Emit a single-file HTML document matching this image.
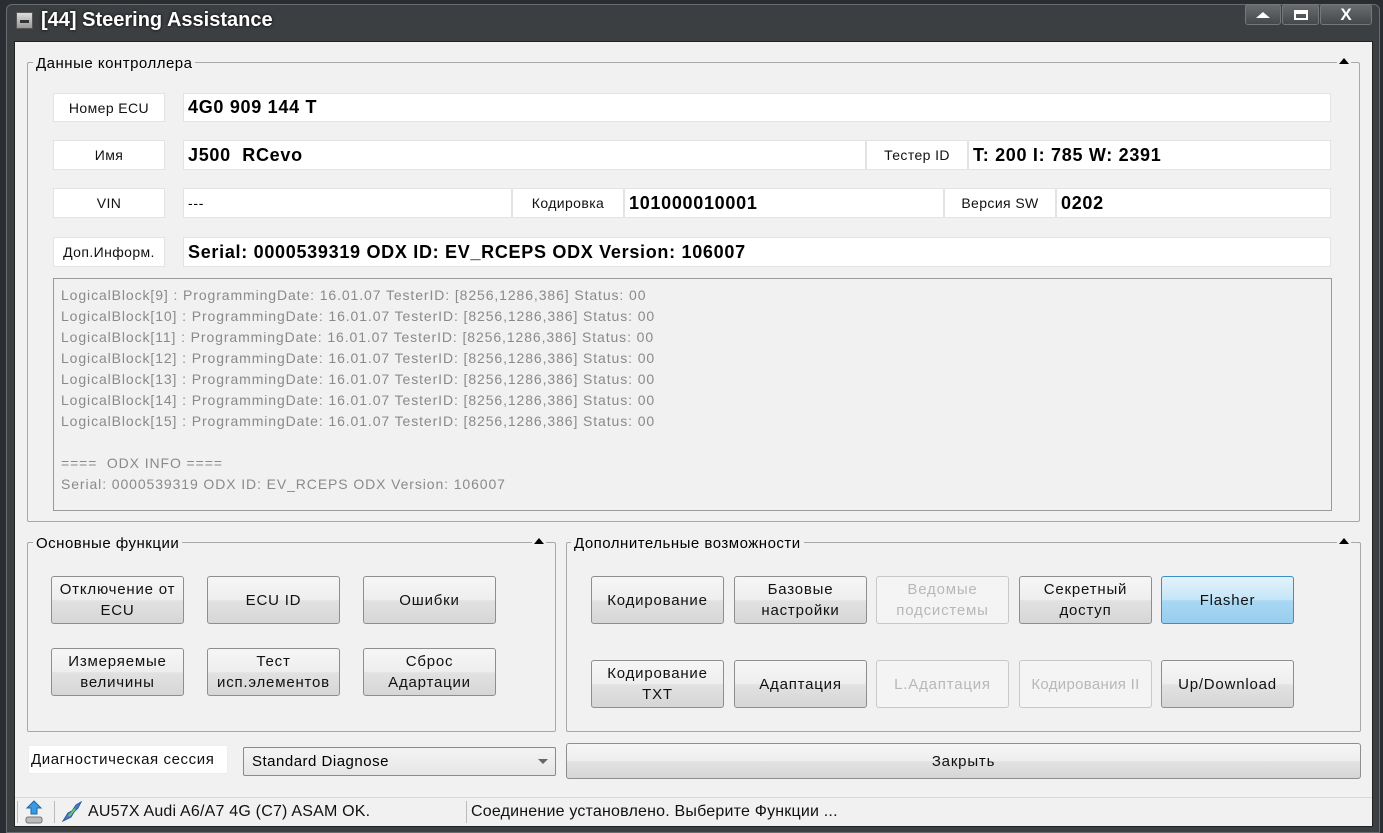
<!DOCTYPE html>
<html><head><meta charset="utf-8"><style>
*{margin:0;padding:0;box-sizing:border-box}
body{width:1383px;height:833px;background:#2a2e33;font-family:"Liberation Sans",sans-serif;position:relative;overflow:hidden}
.a{position:absolute}
.win{left:6px;top:4px;width:1374px;height:829px;background:#3c3f42;border:1px solid #6a6d70;border-radius:6px 6px 0 0}
.content{left:14px;top:41px;width:1359px;height:786px;background:#f1f1f1;border:1px solid #222}
.grp{border:1px solid #a8a8a8;border-radius:2px}
.gt{background:#f1f1f1;font-size:15px;letter-spacing:0.5px;color:#000;padding:0 3px;white-space:nowrap}
.lb{background:#fff;border:1px solid #e3e3e3;font-size:14px;letter-spacing:0.4px;color:#111;display:flex;align-items:center;justify-content:center;white-space:nowrap}
.vb{background:#fff;border:1px solid #e3e3e3;font-size:18px;letter-spacing:0.7px;font-weight:bold;color:#000;display:flex;align-items:center;padding-left:4px;white-space:nowrap}
.vn{font-weight:normal;font-size:14px}
.btn{border:1px solid #8e8e8e;border-radius:3px;background:linear-gradient(#f6f6f6,#eeeeee 50%,#e2e2e2 51%,#d6d6d6);font-size:15px;letter-spacing:0.8px;color:#111;display:flex;align-items:center;justify-content:center;text-align:center;line-height:21px}
.dis{border-color:#c8c8c8;background:#f4f4f4;color:#b8b8b8}
.fl{border-color:#3c8fc7;background:linear-gradient(#e3f3fc,#c4e5f7 50%,#a9d8f3 51%,#98cdee)}
.tri{width:0;height:0;border-left:5px solid transparent;border-right:5px solid transparent;border-bottom:6px solid #000}
.log{font-size:14px;letter-spacing:0.9px;color:#8a8a8a;line-height:21px;white-space:pre}
.tb{border:1px solid #777;border-radius:3px;background:linear-gradient(#6a6d70,#45484b);color:#fff;display:flex;align-items:center;justify-content:center;font-weight:bold}
</style></head><body>
<div class="a win"></div>
<div class="a" style="left:16px;top:12px;width:17px;height:17px;background:linear-gradient(#ddd,#999);border:1px solid #555;"><div class="a" style="left:3px;top:7px;width:9px;height:3px;background:#333"></div></div>
<div class="a" style="left:41px;top:9px;font-size:20px;font-weight:bold;color:#fff;text-shadow:0 0 3px #000">[44] Steering Assistance</div>
<div class="a tb" style="left:1245px;top:4px;width:36px;height:21px"><div class="tri" style="border-bottom-color:#fff;border-left-width:7px;border-right-width:7px"></div></div>
<div class="a tb" style="left:1282px;top:4px;width:37px;height:21px"><div style="width:14px;height:10px;border:2px solid #fff;border-top-width:4px"></div></div>
<div class="a tb" style="left:1320px;top:4px;width:52px;height:21px;font-size:17px">X</div>
<div class="a content"></div>

<div class="a grp" style="left:27px;top:62px;width:1333px;height:460px"></div>
<div class="a gt" style="left:33px;top:55px">Данные контроллера</div>
<div class="a gt" style="left:1337px;top:58px;padding:0 2px"><div class="tri"></div></div>

<div class="a lb" style="left:53px;top:93px;width:112px;height:29px">Номер ECU</div>
<div class="a vb" style="left:183px;top:93px;width:1148px;height:29px">4G0 909 144 T</div>
<div class="a lb" style="left:53px;top:140px;width:112px;height:30px">Имя</div>
<div class="a vb" style="left:183px;top:140px;width:683px;height:30px">J500&nbsp; RCevo</div>
<div class="a lb" style="left:866px;top:140px;width:102px;height:30px">Тестер ID</div>
<div class="a vb" style="left:968px;top:140px;width:363px;height:30px">T: 200 I: 785 W: 2391</div>
<div class="a lb" style="left:53px;top:188px;width:112px;height:30px">VIN</div>
<div class="a vb" style="left:183px;top:188px;width:329px;height:30px"><span class="vn">---</span></div>
<div class="a lb" style="left:512px;top:188px;width:112px;height:30px">Кодировка</div>
<div class="a vb" style="left:624px;top:188px;width:320px;height:30px">101000010001</div>
<div class="a lb" style="left:944px;top:188px;width:112px;height:30px">Версия SW</div>
<div class="a vb" style="left:1056px;top:188px;width:275px;height:30px">0202</div>
<div class="a lb" style="left:53px;top:237px;width:112px;height:30px">Доп.Информ.</div>
<div class="a vb" style="left:183px;top:237px;width:1148px;height:30px">Serial: 0000539319 ODX ID: EV_RCEPS ODX Version: 106007</div>

<div class="a" style="left:53px;top:278px;width:1279px;height:233px;border:1px solid #9a9a9a;background:#f1f1f1"></div>
<div class="a log" style="left:61px;top:285px">LogicalBlock[9] : ProgrammingDate: 16.01.07 TesterID: [8256,1286,386] Status: 00
LogicalBlock[10] : ProgrammingDate: 16.01.07 TesterID: [8256,1286,386] Status: 00
LogicalBlock[11] : ProgrammingDate: 16.01.07 TesterID: [8256,1286,386] Status: 00
LogicalBlock[12] : ProgrammingDate: 16.01.07 TesterID: [8256,1286,386] Status: 00
LogicalBlock[13] : ProgrammingDate: 16.01.07 TesterID: [8256,1286,386] Status: 00
LogicalBlock[14] : ProgrammingDate: 16.01.07 TesterID: [8256,1286,386] Status: 00
LogicalBlock[15] : ProgrammingDate: 16.01.07 TesterID: [8256,1286,386] Status: 00

====  ODX INFO ====
Serial: 0000539319 ODX ID: EV_RCEPS ODX Version: 106007</div>

<div class="a grp" style="left:27px;top:542px;width:529px;height:190px"></div>
<div class="a gt" style="left:33px;top:535px">Основные функции</div>
<div class="a gt" style="left:532px;top:538px;padding:0 2px"><div class="tri"></div></div>
<div class="a btn" style="left:51px;top:576px;width:133px;height:48px">Отключение от<br>ECU</div>
<div class="a btn" style="left:207px;top:576px;width:133px;height:48px">ECU ID</div>
<div class="a btn" style="left:363px;top:576px;width:133px;height:48px">Ошибки</div>
<div class="a btn" style="left:51px;top:648px;width:133px;height:48px">Измеряемые<br>величины</div>
<div class="a btn" style="left:207px;top:648px;width:133px;height:48px">Тест<br>исп.элементов</div>
<div class="a btn" style="left:363px;top:648px;width:133px;height:48px">Сброс<br>Адартации</div>

<div class="a grp" style="left:566px;top:542px;width:795px;height:190px"></div>
<div class="a gt" style="left:571px;top:535px">Дополнительные возможности</div>
<div class="a gt" style="left:1337px;top:538px;padding:0 2px"><div class="tri"></div></div>
<div class="a btn" style="left:591px;top:576px;width:133px;height:48px">Кодирование</div>
<div class="a btn" style="left:734px;top:576px;width:133px;height:48px">Базовые<br>настройки</div>
<div class="a btn dis" style="left:876px;top:576px;width:133px;height:48px">Ведомые<br>подсистемы</div>
<div class="a btn" style="left:1019px;top:576px;width:133px;height:48px">Секретный<br>доступ</div>
<div class="a btn fl" style="left:1161px;top:576px;width:133px;height:48px">Flasher</div>
<div class="a btn" style="left:591px;top:660px;width:133px;height:48px">Кодирование<br>TXT</div>
<div class="a btn" style="left:734px;top:660px;width:133px;height:48px">Адаптация</div>
<div class="a btn dis" style="left:876px;top:660px;width:133px;height:48px">L.Адаптация</div>
<div class="a btn dis" style="left:1019px;top:660px;width:133px;height:48px;letter-spacing:0.3px">Кодирования II</div>
<div class="a btn" style="left:1161px;top:660px;width:133px;height:48px">Up/Download</div>

<div class="a lb" style="left:28px;top:745px;width:200px;height:29px;border-color:#eee;justify-content:flex-start;padding-left:2px;font-size:15px;letter-spacing:0.6px">Диагностическая сессия</div>
<div class="a" style="left:243px;top:747px;width:313px;height:29px;border:1px solid #8a8a8a;border-radius:2px;background:linear-gradient(#f4f4f4,#e6e6e6);font-size:15px;letter-spacing:0.5px;padding:5px 8px">Standard Diagnose</div>
<div class="a" style="left:538px;top:759px;width:0;height:0;border-left:5px solid transparent;border-right:5px solid transparent;border-top:5px solid #666"></div>
<div class="a btn" style="left:566px;top:743px;width:795px;height:36px">Закрыть</div>

<div class="a" style="left:15px;top:797px;width:1357px;height:29px;border-top:1px solid #d8d8d8;background:#f1f1f1"></div>
<div class="a" style="left:17px;top:801px;width:1px;height:22px;background:#bbb"></div>
<svg class="a" style="left:22px;top:799px" width="24" height="26" viewBox="0 0 24 26"><path d="M12 2 L5 9 H9 V15 H15 V9 H19 Z" fill="#3b9be0" stroke="#1a66aa"/><rect x="4" y="18" width="16" height="6" rx="2" fill="#bbb" stroke="#777"/></svg>
<div class="a" style="left:54px;top:801px;width:1px;height:22px;background:#bbb"></div>
<svg class="a" style="left:60px;top:799px" width="24" height="26" viewBox="0 0 24 26"><path d="M3 22 L8 14 L12 12 L16 6 L21 3 L18 9 L14 13 L11 18 Z" fill="#4a7fc6" stroke="#2a5a9a"/><path d="M9 17 L15 10" stroke="#6c6" stroke-width="2"/></svg>
<div class="a" style="left:88px;top:803px;font-size:16px;letter-spacing:0.2px;color:#111">AU57X Audi A6/A7 4G (C7) ASAM OK.</div>
<div class="a" style="left:466px;top:801px;width:1px;height:22px;background:#bbb"></div>
<div class="a" style="left:471px;top:803px;font-size:16px;letter-spacing:0.2px;color:#111">Соединение установлено. Выберите Функции ...</div>
</body></html>
